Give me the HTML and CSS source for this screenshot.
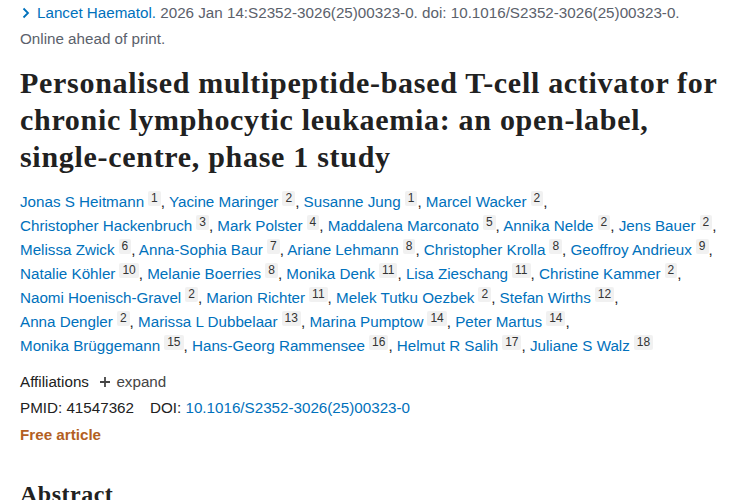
FILE: index.html
```html
<!DOCTYPE html>
<html lang="en">
<head>
<meta charset="utf-8">
<link rel="stylesheet" href="styles.css">
</head>
<body>
<main class="article">
  <div class="cit">
    <div class="cit-line"><span class="chev"><svg width="10" height="12" viewBox="0 0 10 12"><path d="M2.5 1.5 L7 6 L2.5 10.5" fill="none" stroke="#0071bc" stroke-width="1.8"/></svg></span><a class="link" href="#">Lancet Haematol.</a> 2026 Jan 14:S2352-3026(25)00323-0. doi: 10.1016/S2352-3026(25)00323-0.</div>
    <div class="cit-line">Online ahead of print.</div>
  </div>
  <h1 class="title">Personalised multipeptide-based T-cell activator for chronic lymphocytic leukaemia: an open-label, single-centre, phase 1 study</h1>
  <div class="authors">
    <a class="link" href="#">Jonas S Heitmann</a><sup class="aff">1</sup>, <a class="link" href="#">Yacine Maringer</a><sup class="aff">2</sup>, <a class="link" href="#">Susanne Jung</a><sup class="aff">1</sup>, <a class="link" href="#">Marcel Wacker</a><sup class="aff">2</sup>,<br>
    <a class="link" href="#">Christopher Hackenbruch</a><sup class="aff">3</sup>, <a class="link" href="#">Mark Polster</a><sup class="aff">4</sup>, <a class="link" href="#">Maddalena Marconato</a><sup class="aff">5</sup>, <a class="link" href="#">Annika Nelde</a><sup class="aff">2</sup>, <a class="link" href="#">Jens Bauer</a><sup class="aff">2</sup>,<br>
    <a class="link" href="#">Melissa Zwick</a><sup class="aff">6</sup>, <a class="link" href="#">Anna-Sophia Baur</a><sup class="aff">7</sup>, <a class="link" href="#">Ariane Lehmann</a><sup class="aff">8</sup>, <a class="link" href="#">Christopher Krolla</a><sup class="aff">8</sup>, <a class="link" href="#">Geoffroy Andrieux</a><sup class="aff">9</sup>,<br>
    <a class="link" href="#">Natalie Köhler</a><sup class="aff">10</sup>, <a class="link" href="#">Melanie Boerries</a><sup class="aff">8</sup>, <a class="link" href="#">Monika Denk</a><sup class="aff">11</sup>, <a class="link" href="#">Lisa Zieschang</a><sup class="aff">11</sup>, <a class="link" href="#">Christine Kammer</a><sup class="aff">2</sup>,<br>
    <a class="link" href="#">Naomi Hoenisch-Gravel</a><sup class="aff">2</sup>, <a class="link" href="#">Marion Richter</a><sup class="aff">11</sup>, <a class="link" href="#">Melek Tutku Oezbek</a><sup class="aff">2</sup>, <a class="link" href="#">Stefan Wirths</a><sup class="aff">12</sup>,<br>
    <a class="link" href="#">Anna Dengler</a><sup class="aff">2</sup>, <a class="link" href="#">Marissa L Dubbelaar</a><sup class="aff">13</sup>, <a class="link" href="#">Marina Pumptow</a><sup class="aff">14</sup>, <a class="link" href="#">Peter Martus</a><sup class="aff">14</sup>,<br>
    <a class="link" href="#">Monika Brüggemann</a><sup class="aff">15</sup>, <a class="link" href="#">Hans-Georg Rammensee</a><sup class="aff">16</sup>, <a class="link" href="#">Helmut R Salih</a><sup class="aff">17</sup>, <a class="link" href="#">Juliane S Walz</a><sup class="aff">18</sup>
  </div>
  <div class="affil">Affiliations <span class="expand"><svg width="12" height="12" viewBox="0 0 12 12"><path d="M6 1 V11 M1 6 H11" stroke="#454545" stroke-width="1.8"/></svg> expand</span></div>
  <div class="ids"><span class="pmid">PMID: 41547362</span><span>DOI: <a class="link" href="#">10.1016/S2352-3026(25)00323-0</a></span></div>
  <div class="free">Free article</div>
  <h2 class="abstract">Abstract</h2>
</main>
</body>
</html>
```
FILE: styles.css
```css
html, body { margin: 0; padding: 0; background: #fff; }
body { font-family: "Liberation Sans", Arial, sans-serif; color: #212121; font-size: 15.2px; }
.article { padding: 0 20px; }
.link { color: #0071bc; text-decoration: none; }
.cit { color: #5b616b; }
.cit-line { line-height: 25px; }
.chev { display: inline-block; width: 12px; margin-left: 1px; margin-right: 4px; vertical-align: -1px; }
.title { font-family: "Liberation Serif", "Times New Roman", serif; font-weight: bold; font-size: 30px; letter-spacing: 0.7px; line-height: 37px; margin: 13px 0 0 0; color: #212121; }
.authors { margin-top: 15px; line-height: 24px; }
.aff { display: inline-block; font-size: 12px; line-height: 15px; background: #f1f1f1; color: #333; padding: 0 3px; margin-left: 4px; vertical-align: 5px; border-radius: 2px; }
.affil { margin-top: 11px; line-height: 26px; color: #212121; }
.expand { margin-left: 6px; color: #454545; }
.expand svg { vertical-align: -1px; margin-right: 1px; }
.ids { line-height: 26px; }
.pmid { margin-right: 16px; }
.free { color: #b35f22; line-height: 28px; font-weight: 600; }
.abstract { font-family: "Liberation Serif", "Times New Roman", serif; font-weight: bold; font-size: 24px; letter-spacing: 0.5px; margin: 30px 0 0; line-height: 30px; }
```
